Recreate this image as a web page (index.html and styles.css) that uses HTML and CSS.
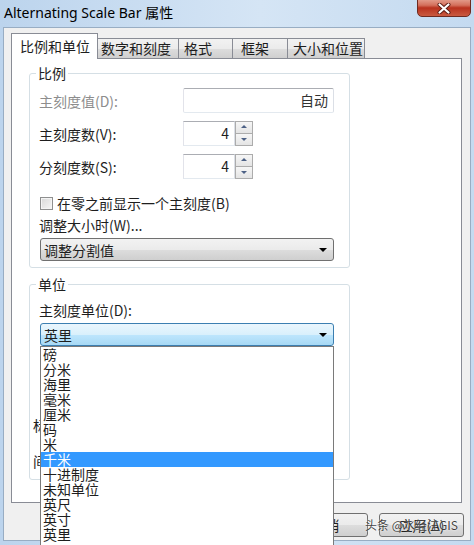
FILE: index.html
```html
<!DOCTYPE html>
<html lang="zh-CN">
<head>
  <meta charset="UTF-8">
  <title>Alternating Scale Bar 属性</title>
  <link rel="stylesheet" href="styles.css">
</head>
<body>

<div class="window">
  <header class="titlebar">
    <span class="title">Alternating Scale Bar 属性</span>
    <button class="close" title="关闭">
      <svg width="14" height="11" viewBox="0 0 14 11">
        <path d="M2.5 1.5 L11.5 9.5 M11.5 1.5 L2.5 9.5" stroke="#5a1a12" stroke-width="4" stroke-linecap="round"/>
        <path d="M2.5 1.5 L11.5 9.5 M11.5 1.5 L2.5 9.5" stroke="#fff" stroke-width="2.2" stroke-linecap="round"/>
      </svg>
    </button>
  </header>

  <div class="client">
    <ul class="tabs">
      <li class="tab tab-scale active">比例和单位</li>
      <li class="tab tab-numbers">数字和刻度</li>
      <li class="tab tab-format">格式</li>
      <li class="tab tab-frame">框架</li>
      <li class="tab tab-size">大小和位置</li>
    </ul>

    <div class="panel">

      <!-- 比例 -->
      <fieldset class="group group-scale">
        <legend>比例</legend>
        <div class="row">
          <label class="disabled">主刻度值(D):</label>
          <div class="textbox">自动</div>
        </div>
        <div class="row">
          <label>主刻度数(V):</label>
          <div class="spin">
            <span class="spin-value">4</span>
            <span class="spin-btns"><span class="spin-up"></span><span class="spin-down"></span></span>
          </div>
        </div>
        <div class="row">
          <label>分刻度数(S):</label>
          <div class="spin">
            <span class="spin-value">4</span>
            <span class="spin-btns"><span class="spin-up"></span><span class="spin-down"></span></span>
          </div>
        </div>
        <div class="check"><span class="checkbox"></span>在零之前显示一个主刻度(B)</div>
        <div class="caption">调整大小时(W)...</div>
        <div class="combo">调整分割值<span class="arrow"></span></div>
      </fieldset>

      <!-- 单位 -->
      <fieldset class="group group-units">
        <legend>单位</legend>
        <div class="caption">主刻度单位(D):</div>
        <div class="combo-wrap">
          <div class="combo open">英里<span class="arrow"></span></div>
          <ul class="droplist">
            <li>磅</li>
            <li>分米</li>
            <li>海里</li>
            <li>毫米</li>
            <li>厘米</li>
            <li>码</li>
            <li>米</li>
            <li class="selected">千米</li>
            <li>十进制度</li>
            <li>未知单位</li>
            <li>英尺</li>
            <li>英寸</li>
            <li>英里</li>
          </ul>
        </div>
        <div class="caption behind label-text">标注(L):</div>
        <div class="caption behind label-gap">间距(G):</div>
      </fieldset>

    </div>

    <div class="buttons">
      <button>确定</button>
      <button>取消</button>
      <button>应用(A)</button>
    </div>
  </div>

  <span class="watermark">头条 @水经注GIS</span>
</div>

</body>
</html>
```

FILE: styles.css
```css
* { box-sizing: border-box; margin: 0; padding: 0; }
html, body { width: 474px; height: 545px; overflow: hidden; }
body {
  font: 14px/16px "Noto Sans CJK SC", sans-serif; color: #1e1e1e;
  background: linear-gradient(90deg, #bcd4ed, #d5e5f5 55%, #c4daf0);
}
button { font: inherit; color: inherit; }

.window { position: relative; height: 545px; }

/* Title bar */
.titlebar { height: 27px; position: relative; }
.title { display: block; padding: 4px 0 0 4px; font: 14px/18px "Noto Sans", "Noto Sans CJK SC", sans-serif; color: #000; }
.close {
  position: absolute; top: -3px; right: 3px; width: 54px; height: 20px;
  border: 1px solid #6e2a20; border-radius: 0 0 5px 5px;
  background: linear-gradient(#e7a999, #d4705c 40%, #b9321e 55%, #c95a40);
  display: flex; align-items: center; justify-content: center; padding-top: 3px;
}

/* Client area */
.client {
  height: 514px; margin: 0 3px; padding: 5px 6px 0 7px;
  border: 1px solid #98adc3; background: #f0f0f0;
}

.tabs { display: flex; align-items: flex-end; height: 25px; list-style: none; position: relative; z-index: 1; }
.tab {
  height: 20px; margin-left: -1px; padding-top: 1px;
  border: 1px solid #898c95; border-bottom: none; line-height: 17px; white-space: nowrap;
  background: linear-gradient(#f2f2f2, #ebebeb 50%, #dddddd 51%, #cfcfcf);
}
.tab.active { height: 26px; margin-left: 0; margin-bottom: -1px; padding-top: 4px; background: #fff; z-index: 2; }
.tab-scale { width: 87px; padding-left: 8px; }
.tab-numbers { width: 82px; padding-left: 3px; }
.tab-format { width: 55px; padding-left: 5px; }
.tab-frame { width: 56px; padding-left: 8px; }
.tab-size { width: 78px; padding-left: 5px; }

.panel { width: 451px; height: 445px; border: 1px solid #898c95; background: #fff; padding: 6px 0 0 17px; }

/* Group boxes */
.group { width: 321px; border: 1px solid #d5dfe5; border-radius: 3px; padding: 7px 15px 6px 9px; }
.group legend { margin-left: -3px; padding: 0 2px; line-height: 16px; }
.group-units { margin-top: 8px; padding-top: 10px; padding-bottom: 10px; }

.row { display: flex; align-items: center; height: 25px; }
.row + .row { margin-top: 8px; }
.row label { width: 144px; }
.row label.disabled { color: #8d8d8d; }

.textbox {
  width: 151px; height: 25px; padding: 0 5px; line-height: 23px; text-align: right; color: #333;
  border: 1px solid; border-color: #abadb3 #dbdfe6 #e3e9ef #e2e3ea; border-radius: 2px; background: #fff;
}

.spin { display: flex; height: 25px; }
.spin-value {
  width: 52px; padding-right: 5px; line-height: 23px; text-align: right;
  border: 1px solid; border-color: #abadb3 #dbdfe6 #e3e9ef #e2e3ea; background: #fff;
}
.spin-btns { display: flex; flex-direction: column; width: 18px; }
.spin-up, .spin-down {
  flex: 1; position: relative; border: 1px solid #acacac;
  background: linear-gradient(#f6f6f6, #e4e4e4);
}
.spin-down { border-top: none; }
.spin-up::after, .spin-down::after {
  content: ""; position: absolute; left: 5px; top: 3px;
  border-left: 3.5px solid transparent; border-right: 3.5px solid transparent;
}
.spin-up::after { border-bottom: 3px solid #4d6185; }
.spin-down::after { border-top: 3px solid #4d6185; top: 4px; }

.check { display: flex; align-items: center; gap: 4px; height: 16px; margin-top: 16px; margin-left: 1px; }
.checkbox {
  width: 13px; height: 13px; border: 1px solid #8e8f8f;
  background: linear-gradient(135deg, #d8d8d8, #f6f6f6); box-shadow: inset 0 0 0 1px #f4f4f4;
}

.caption { height: 16px; margin-top: 6px; white-space: nowrap; }
.group-units > .caption:first-of-type { margin-top: 0; }

.combo {
  display: flex; align-items: center; justify-content: space-between;
  height: 23px; margin-top: 5px; margin-left: 1px; padding: 0 6px 0 3px;
  border: 1px solid #707070; border-radius: 3px;
  background: linear-gradient(#f2f2f2, #ebebeb 50%, #dddddd 51%, #cfcfcf);
}
.combo .arrow { border-left: 4px solid transparent; border-right: 4px solid transparent; border-top: 4px solid #000; }
.combo.open {
  margin-top: 0; border-color: #3c7fb1;
  background: linear-gradient(#eaf6fd, #d9f0fc 50%, #bee6fd 51%, #a7d9f5);
}

.combo-wrap { position: relative; margin-top: 5px; z-index: 5; }
.droplist {
  position: absolute; top: 100%; left: 1px; right: 0; height: 210px;
  list-style: none; background: #fff; border: 1px solid #7a7a7a;
}
.droplist li { height: 15px; line-height: 15px; padding-left: 2px; }
.droplist li.selected { background: #3399ff; color: #fff; }

.behind { margin-left: -6px; }
.label-text { margin-top: 71px; }
.label-gap { margin-top: 20px; }

/* Dialog buttons */
.buttons { display: flex; justify-content: flex-end; gap: 11px; margin-top: 10px; }
.buttons button {
  width: 85px; height: 24px; border: 1px solid #707070; border-radius: 3px;
  background: linear-gradient(#f2f2f2, #ebebeb 50%, #dddddd 51%, #cfcfcf);
}

.watermark {
  position: absolute; left: 365px; top: 518px; z-index: 10; font-size: 12px; line-height: 14px;
  color: rgba(30, 30, 30, 0.85); text-shadow: 0 0 2px #fff; white-space: nowrap;
}
```
